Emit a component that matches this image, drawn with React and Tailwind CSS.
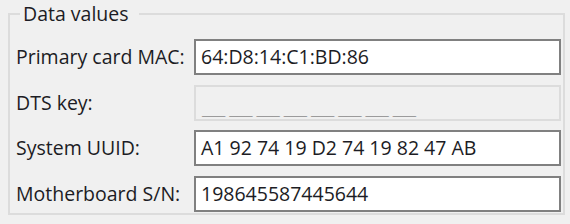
const rows = [
  { label: 'Primary card MAC:', value: '64:D8:14:C1:BD:86' },
  { label: 'DTS key:', value: null },
  { label: 'System UUID:', value: 'A1 92 74 19 D2 74 19 82 47 AB' },
  { label: 'Motherboard S/N:', value: '198645587445644' },
];

const App = () => {
  return (
    <div
      className="w-[570px] h-[224px] bg-[#f0f0f0] pt-px text-[#1c1c24] text-[19.5px]"
      style={{ fontFamily: '"Open Sans", "Noto Sans", sans-serif' }}
    >
      <fieldset className="ml-[8px] mr-[5px] h-[214px] border-2 border-[#dcdcdc] pl-[10px] pr-[2px]">
        <legend className="pl-[3px] pr-[10px] leading-[26px]">Data values</legend>
        <div className="flex flex-col gap-[9.5px] pt-[12px]">
          {rows.map((r) => (
            <div key={r.label} className="flex items-center h-[36px] -ml-[4px]">
              <div className="w-[178px] shrink-0">{r.label}</div>
              {r.value !== null ? (
                <div className="flex-1 h-full border-2 border-[#808080] bg-white flex items-center pl-[5px]">
                  {r.value}
                </div>
              ) : (
                <div className="flex-1 h-full border-2 border-[#dcdcdc] bg-[#f0f0f0] flex items-end pl-[6px] pb-[2px]">
                  <span
                    className="text-[14px] leading-[14px] text-[#5a5a5a] font-bold whitespace-pre"
                    style={{ fontFamily: '"Liberation Sans", sans-serif' }}
                  >
                    ___ ___ ___ ___ ___ ___ ___ ___
                  </span>
                </div>
              )}
            </div>
          ))}
        </div>
      </fieldset>
    </div>
  );
};

export default App;
